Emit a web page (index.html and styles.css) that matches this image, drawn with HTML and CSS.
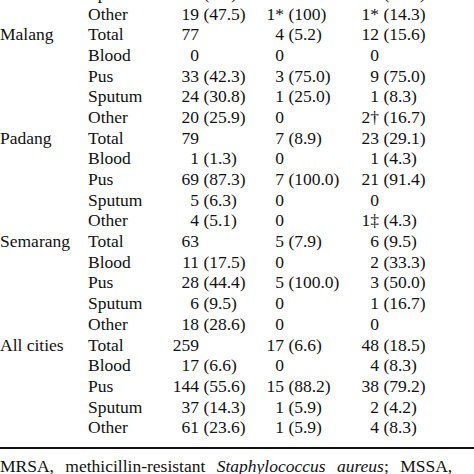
FILE: index.html
```html
<!DOCTYPE html>
<html>
<head>
<meta charset="utf-8">
<link rel="stylesheet" href="styles.css">
</head>
<body>
<div class="page">
  <div class="grid">
    <div class="c"></div><div class="t">Sputum</div><div class="v"><span class="n">2</span><span class="p"> (5.0)</span></div><div class="v"><span class="n">0</span></div><div class="v"><span class="n">1</span><span class="p"> (14.3)</span></div>
    <div class="c"></div><div class="t">Other</div><div class="v"><span class="n">19</span><span class="p"> (47.5)</span></div><div class="v"><span class="n">1*</span><span class="p"> (100)</span></div><div class="v"><span class="n">1*</span><span class="p"> (14.3)</span></div>

    <div class="c">Malang</div><div class="t">Total</div><div class="v"><span class="n">77</span></div><div class="v"><span class="n">4</span><span class="p"> (5.2)</span></div><div class="v"><span class="n">12</span><span class="p"> (15.6)</span></div>
    <div class="c"></div><div class="t">Blood</div><div class="v"><span class="n">0</span></div><div class="v"><span class="n">0</span></div><div class="v"><span class="n">0</span></div>
    <div class="c"></div><div class="t">Pus</div><div class="v"><span class="n">33</span><span class="p"> (42.3)</span></div><div class="v"><span class="n">3</span><span class="p"> (75.0)</span></div><div class="v"><span class="n">9</span><span class="p"> (75.0)</span></div>
    <div class="c"></div><div class="t">Sputum</div><div class="v"><span class="n">24</span><span class="p"> (30.8)</span></div><div class="v"><span class="n">1</span><span class="p"> (25.0)</span></div><div class="v"><span class="n">1</span><span class="p"> (8.3)</span></div>
    <div class="c"></div><div class="t">Other</div><div class="v"><span class="n">20</span><span class="p"> (25.9)</span></div><div class="v"><span class="n">0</span></div><div class="v"><span class="n">2†</span><span class="p"> (16.7)</span></div>

    <div class="c">Padang</div><div class="t">Total</div><div class="v"><span class="n">79</span></div><div class="v"><span class="n">7</span><span class="p"> (8.9)</span></div><div class="v"><span class="n">23</span><span class="p"> (29.1)</span></div>
    <div class="c"></div><div class="t">Blood</div><div class="v"><span class="n">1</span><span class="p"> (1.3)</span></div><div class="v"><span class="n">0</span></div><div class="v"><span class="n">1</span><span class="p"> (4.3)</span></div>
    <div class="c"></div><div class="t">Pus</div><div class="v"><span class="n">69</span><span class="p"> (87.3)</span></div><div class="v"><span class="n">7</span><span class="p"> (100.0)</span></div><div class="v"><span class="n">21</span><span class="p"> (91.4)</span></div>
    <div class="c"></div><div class="t">Sputum</div><div class="v"><span class="n">5</span><span class="p"> (6.3)</span></div><div class="v"><span class="n">0</span></div><div class="v"><span class="n">0</span></div>
    <div class="c"></div><div class="t">Other</div><div class="v"><span class="n">4</span><span class="p"> (5.1)</span></div><div class="v"><span class="n">0</span></div><div class="v"><span class="n">1‡</span><span class="p"> (4.3)</span></div>

    <div class="c">Semarang</div><div class="t">Total</div><div class="v"><span class="n">63</span></div><div class="v"><span class="n">5</span><span class="p"> (7.9)</span></div><div class="v"><span class="n">6</span><span class="p"> (9.5)</span></div>
    <div class="c"></div><div class="t">Blood</div><div class="v"><span class="n">11</span><span class="p"> (17.5)</span></div><div class="v"><span class="n">0</span></div><div class="v"><span class="n">2</span><span class="p"> (33.3)</span></div>
    <div class="c"></div><div class="t">Pus</div><div class="v"><span class="n">28</span><span class="p"> (44.4)</span></div><div class="v"><span class="n">5</span><span class="p"> (100.0)</span></div><div class="v"><span class="n">3</span><span class="p"> (50.0)</span></div>
    <div class="c"></div><div class="t">Sputum</div><div class="v"><span class="n">6</span><span class="p"> (9.5)</span></div><div class="v"><span class="n">0</span></div><div class="v"><span class="n">1</span><span class="p"> (16.7)</span></div>
    <div class="c"></div><div class="t">Other</div><div class="v"><span class="n">18</span><span class="p"> (28.6)</span></div><div class="v"><span class="n">0</span></div><div class="v"><span class="n">0</span></div>

    <div class="c">All cities</div><div class="t">Total</div><div class="v"><span class="n">259</span></div><div class="v"><span class="n">17</span><span class="p"> (6.6)</span></div><div class="v"><span class="n">48</span><span class="p"> (18.5)</span></div>
    <div class="c"></div><div class="t">Blood</div><div class="v"><span class="n">17</span><span class="p"> (6.6)</span></div><div class="v"><span class="n">0</span></div><div class="v"><span class="n">4</span><span class="p"> (8.3)</span></div>
    <div class="c"></div><div class="t">Pus</div><div class="v"><span class="n">144</span><span class="p"> (55.6)</span></div><div class="v"><span class="n">15</span><span class="p"> (88.2)</span></div><div class="v"><span class="n">38</span><span class="p"> (79.2)</span></div>
    <div class="c"></div><div class="t">Sputum</div><div class="v"><span class="n">37</span><span class="p"> (14.3)</span></div><div class="v"><span class="n">1</span><span class="p"> (5.9)</span></div><div class="v"><span class="n">2</span><span class="p"> (4.2)</span></div>
    <div class="c"></div><div class="t">Other</div><div class="v"><span class="n">61</span><span class="p"> (23.6)</span></div><div class="v"><span class="n">1</span><span class="p"> (5.9)</span></div><div class="v"><span class="n">4</span><span class="p"> (8.3)</span></div>
  </div>
  <div class="rule"></div>
  <p class="foot">MRSA, methicillin-resistant <i>Staphylococcus aureus</i>; MSSA,</p>
</div>
</body>
</html>
```
FILE: styles.css
```css
html, body {
  margin: 0;
  padding: 0;
  background: #fff;
}
body {
  width: 474px;
  height: 474px;
  overflow: hidden;
  font-family: "Liberation Serif", "DejaVu Serif", serif;
  font-size: 17.5px;
  color: #111;
}
.page {
  margin-top: -17.2px;
}
.grid {
  display: grid;
  grid-template-columns: 88px 80px 85px 95px 1fr;
  grid-auto-rows: 20.7px;
  line-height: 20.7px;
}
.c, .t, .v {
  white-space: pre;
}
.n {
  display: inline-block;
  width: 31px;
  text-align: right;
}
.rule {
  margin-top: 8.8px;
  height: 2px;
  background: #111;
}
.foot {
  margin: 7px 0 0 0;
  line-height: 20.7px;
  white-space: nowrap;
  word-spacing: 7px;
}
```
